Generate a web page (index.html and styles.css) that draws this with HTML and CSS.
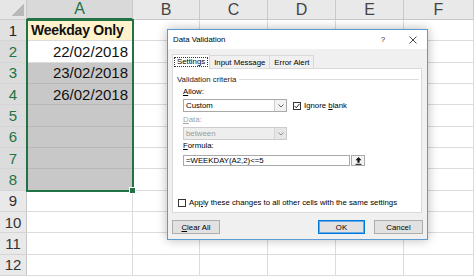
FILE: index.html
```html
<!DOCTYPE html>
<html lang="en">
<head>
  <meta charset="UTF-8" />
  <title>Data Validation</title>
  <link rel="stylesheet" href="styles.css">
</head>
<body>

  <div class="sheet">
    <div class="corner"></div>
    <div class="col-head sel">A</div>
    <div class="col-head">B</div>
    <div class="col-head">C</div>
    <div class="col-head">D</div>
    <div class="col-head">E</div>
    <div class="col-head">F</div>

    <div class="row-head first">1</div>
    <div class="cell a title">Weekday Only</div>
    <div class="cell"></div><div class="cell"></div><div class="cell"></div><div class="cell"></div><div class="cell"></div>

    <div class="row-head sel">2</div>
    <div class="cell a date active">22/02/2018</div>
    <div class="cell"></div><div class="cell"></div><div class="cell"></div><div class="cell"></div><div class="cell"></div>

    <div class="row-head sel">3</div>
    <div class="cell a date shaded">23/02/2018</div>
    <div class="cell"></div><div class="cell"></div><div class="cell"></div><div class="cell"></div><div class="cell"></div>

    <div class="row-head sel">4</div>
    <div class="cell a date shaded">26/02/2018</div>
    <div class="cell"></div><div class="cell"></div><div class="cell"></div><div class="cell"></div><div class="cell"></div>

    <div class="row-head sel">5</div>
    <div class="cell a shaded"></div>
    <div class="cell"></div><div class="cell"></div><div class="cell"></div><div class="cell"></div><div class="cell"></div>

    <div class="row-head sel">6</div>
    <div class="cell a shaded"></div>
    <div class="cell"></div><div class="cell"></div><div class="cell"></div><div class="cell"></div><div class="cell"></div>

    <div class="row-head sel">7</div>
    <div class="cell a shaded"></div>
    <div class="cell"></div><div class="cell"></div><div class="cell"></div><div class="cell"></div><div class="cell"></div>

    <div class="row-head sel">8</div>
    <div class="cell a shaded"></div>
    <div class="cell"></div><div class="cell"></div><div class="cell"></div><div class="cell"></div><div class="cell"></div>

    <div class="row-head">9</div>
    <div class="cell a"></div>
    <div class="cell"></div><div class="cell"></div><div class="cell"></div><div class="cell"></div><div class="cell"></div>

    <div class="row-head">10</div>
    <div class="cell a"></div>
    <div class="cell"></div><div class="cell"></div><div class="cell"></div><div class="cell"></div><div class="cell"></div>

    <div class="row-head">11</div>
    <div class="cell a"></div>
    <div class="cell"></div><div class="cell"></div><div class="cell"></div><div class="cell"></div><div class="cell"></div>

    <div class="row-head">12</div>
    <div class="cell a"></div>
    <div class="cell"></div><div class="cell"></div><div class="cell"></div><div class="cell"></div><div class="cell"></div>
  </div>

  <!-- selected range A1:A8 -->
  <div class="selection"></div>

  <!-- Data Validation dialog -->
  <div class="dialog">
    <div class="titlebar">
      <span class="title">Data Validation</span>
      <span class="title-btn">?</span>
      <span class="title-btn">
        <svg width="8" height="8" viewBox="0 0 8 8"><path d="M0.5 0.5 L7.5 7.5 M7.5 0.5 L0.5 7.5" stroke="#333" stroke-width="0.9" fill="none"/></svg>
      </span>
    </div>

    <div class="dlg-body">
      <div class="tabs">
        <div class="tab active"><span class="focus">Settings</span></div>
        <div class="tab">Input Message</div>
        <div class="tab">Error Alert</div>
      </div>

      <div class="panel">
        <div class="group-title">Validation criteria</div>

        <div class="field">
          <div class="label"><u>A</u>llow:</div>
          <div class="row">
            <div class="select">
              <span class="select-text">Custom</span>
              <span class="select-btn">
                <svg width="6" height="4" viewBox="0 0 6 4"><polyline points="0.5,0.5 3,3 5.5,0.5" stroke="#555" stroke-width="0.9" fill="none"/></svg>
              </span>
            </div>
            <span class="check checked">
              <svg width="6" height="6" viewBox="0 0 6 6"><polyline points="0.6,3 2.3,4.8 5.5,0.8" stroke="#222" stroke-width="1" fill="none"/></svg>
            </span>
            <span class="check-label">Ignore <u>b</u>lank</span>
          </div>

          <div class="label gap disabled"><u>D</u>ata:</div>
          <div class="select disabled-select">
            <span class="select-text">between</span>
            <span class="select-btn">
              <svg width="6" height="4" viewBox="0 0 6 4"><polyline points="0.5,0.5 3,3 5.5,0.5" stroke="#888" stroke-width="0.9" fill="none"/></svg>
            </span>
          </div>

          <div class="label tight"><u>F</u>ormula:</div>
          <div class="formula-row">
            <div class="formula">=WEEKDAY(A2,2)&lt;=5</div>
            <div class="collapse-btn">
              <svg width="7" height="8" viewBox="0 0 7 8"><path d="M3.5 0 L6.5 3.2 H4.6 V5.8 H2.4 V3.2 H0.5 Z" fill="#111"/><rect x="0.5" y="6.8" width="6" height="1" fill="#111"/></svg>
            </div>
          </div>
        </div>

        <div class="apply-row">
          <span class="check"></span>
          <span class="check-label">Ap<u>p</u>ly these changes to all other cells with the same settings</span>
        </div>
      </div>

      <div class="buttons">
        <button class="btn"><u>C</u>lear All</button>
        <button class="btn default">OK</button>
        <button class="btn cancel">Cancel</button>
      </div>
    </div>
  </div>

</body>
</html>
```

FILE: styles.css
```css
* {
  box-sizing: border-box;
  margin: 0;
  padding: 0;
}

body {
  font-family: "Liberation Sans", Arial, sans-serif;
  background: #fff;
  width: 474px;
  height: 278px;
  overflow: hidden;
  position: relative;
}

/* ---------- spreadsheet ---------- */

.sheet {
  display: grid;
  grid-template-columns: 27px 106px 67px 68px 68px 68px 70px;
  grid-template-rows: 20px;
  grid-auto-rows: 21.33px;
}

.corner {
  background: #e6e6e6 linear-gradient(135deg, transparent 50%, #b9b9b9 50%) no-repeat;
  background-size: 12px 12px;
  background-position: right 2px bottom 3px;
  border-right: 1px solid #c9c9c9;
  border-bottom: 1px solid #c9c9c9;
}

.col-head {
  background: #e9e9e9;
  border-right: 1px solid #c9c9c9;
  border-bottom: 1px solid #c9c9c9;
  display: flex;
  align-items: center;
  justify-content: center;
  font-size: 16px;
  color: #444;
}

.col-head.sel {
  background: #d9d9d9;
  color: #217346;
  border-bottom: 2px solid #217346;
}

.row-head {
  background: #e9e9e9;
  border-right: 1px solid #c9c9c9;
  border-bottom: 1px solid #d5d5d5;
  display: flex;
  align-items: center;
  justify-content: center;
  font-size: 15px;
  color: #333;
}

.row-head.first {
  background: #e1e1e1;
  color: #222;
}

.row-head.sel {
  background: #dcdcdc;
  color: #217346;
}

.cell {
  border-right: 1px solid #dcdcdc;
  border-bottom: 1px solid #dcdcdc;
}

.cell.title {
  background: #fff2cc;
  font-weight: bold;
  font-size: 14px;
  letter-spacing: -0.25px;
  padding-left: 4px;
  display: flex;
  align-items: center;
  color: #111;
}

.cell.date {
  font-size: 15px;
  color: #111;
  display: flex;
  align-items: center;
  justify-content: flex-end;
  padding-right: 4px;
}

.cell.shaded {
  background: #c8c8c8;
  border-bottom-color: #b8b8b8;
}

.selection {
  position: absolute;
  left: 26px;
  top: 19px;
  width: 108px;
  height: 173px;
  border: 2px solid #217346;
}

.selection::after {
  content: "";
  position: absolute;
  right: -4px;
  bottom: -4px;
  width: 5px;
  height: 5px;
  background: #217346;
  border: 1px solid #fff;
}

/* ---------- dialog ---------- */

.dialog {
  position: absolute;
  left: 167px;
  top: 29px;
  width: 261px;
  height: 211px;
  border: 1px solid #5b9bd5;
  background: #f0f0f0;
  box-shadow: 0 0 10px rgba(0,0,0,0.28);
  font-size: 7.8px;
  color: #000;
  display: flex;
  flex-direction: column;
}

.titlebar {
  height: 19px;
  background: #fff;
  display: flex;
  align-items: center;
  padding-left: 5px;
}

.title {
  flex: 1;
}

.title-btn {
  width: 28px;
  height: 19px;
  display: flex;
  align-items: center;
  justify-content: center;
  color: #333;
  font-size: 8px;
}

.title-btn + .title-btn {
  margin-left: 2px;
}

.dlg-body {
  flex: 1;
  display: flex;
  flex-direction: column;
  padding: 0 5px 0 4px;
}

.tabs {
  display: flex;
  align-items: flex-end;
  height: 14px;
  margin-top: 5px;
}

.tab {
  height: 13px;
  padding: 0 4px;
  border: 1px solid #d9d9d9;
  border-bottom: none;
  margin-left: -1px;
  display: flex;
  align-items: center;
  background: #f0f0f0;
}

.tab.active {
  margin-left: 0;
  height: 15px;
  margin-bottom: -1px;
  padding: 0 1px;
  background: #fff;
  position: relative;
  z-index: 1;
}

.focus {
  border: 1px dotted #333;
  padding: 0 2px;
  line-height: 8px;
}

.panel {
  flex: 1;
  background: #fff;
  border: 1px solid #d9d9d9;
  padding: 5px 2px 0 4px;
  display: flex;
  flex-direction: column;
}

.group-title {
  display: flex;
  align-items: center;
  height: 10px;
  color: #1a1a1a;
}

.group-title::after {
  content: "";
  flex: 1;
  border-top: 1px solid #dcdcdc;
  margin-left: 3px;
}

.field {
  margin-left: 6px;
}

.label {
  height: 10px;
  line-height: 10px;
  margin-top: 3px;
  margin-bottom: 2px;
}

.label.gap {
  margin-top: 3px;
}

.label.tight {
  margin-top: 1px;
  margin-bottom: 4px;
}

.label.disabled {
  color: #a0a0a0;
}

.row {
  display: flex;
  align-items: center;
}

.select {
  width: 104px;
  height: 13px;
  border: 1px solid #a9a9a9;
  background: #fff;
  display: flex;
}

.select-text {
  flex: 1;
  padding-left: 2px;
  line-height: 11px;
}

.select-btn {
  width: 12px;
  border-left: 1px solid #cfcfcf;
  background: #f2f2f2;
  display: flex;
  align-items: center;
  justify-content: center;
}

.disabled-select {
  background: #eeeeee;
  border-color: #cccccc;
  color: #9a9a9a;
}

.disabled-select .select-btn {
  background: #e6e6e6;
  border-left-color: #d4d4d4;
}

.check {
  width: 8px;
  height: 8px;
  border: 1px solid #333;
  background: #fff;
  display: inline-flex;
  align-items: center;
  justify-content: center;
  flex-shrink: 0;
}

.row .check {
  margin-left: 6px;
}

.check-label {
  margin-left: 3px;
  white-space: nowrap;
}

.formula-row {
  display: flex;
  height: 11px;
}

.formula {
  width: 167px;
  border: 1px solid #a9a9a9;
  padding-left: 2px;
  line-height: 9px;
}

.collapse-btn {
  width: 14px;
  margin-left: 1px;
  border: 1px solid #a9a9a9;
  background: #f4f4f4;
  display: flex;
  align-items: center;
  justify-content: center;
}

.apply-row {
  display: flex;
  align-items: center;
  margin-top: 32px;
  margin-left: 1px;
}

.buttons {
  display: flex;
  align-items: flex-start;
  height: 26px;
  padding-top: 7px;
}

.btn {
  height: 14px;
  font-family: inherit;
  font-size: 7.8px;
  color: #000;
  background: #e1e1e1;
  border: 1px solid #adadad;
  width: 48px;
}

.btn.default {
  margin-left: auto;
  width: 47px;
  border-color: #0078d7;
  box-shadow: inset 0 0 0 1px #66a9e8;
}

.btn.cancel {
  width: 49px;
  margin-left: 9px;
  margin-right: -1px;
}
```
